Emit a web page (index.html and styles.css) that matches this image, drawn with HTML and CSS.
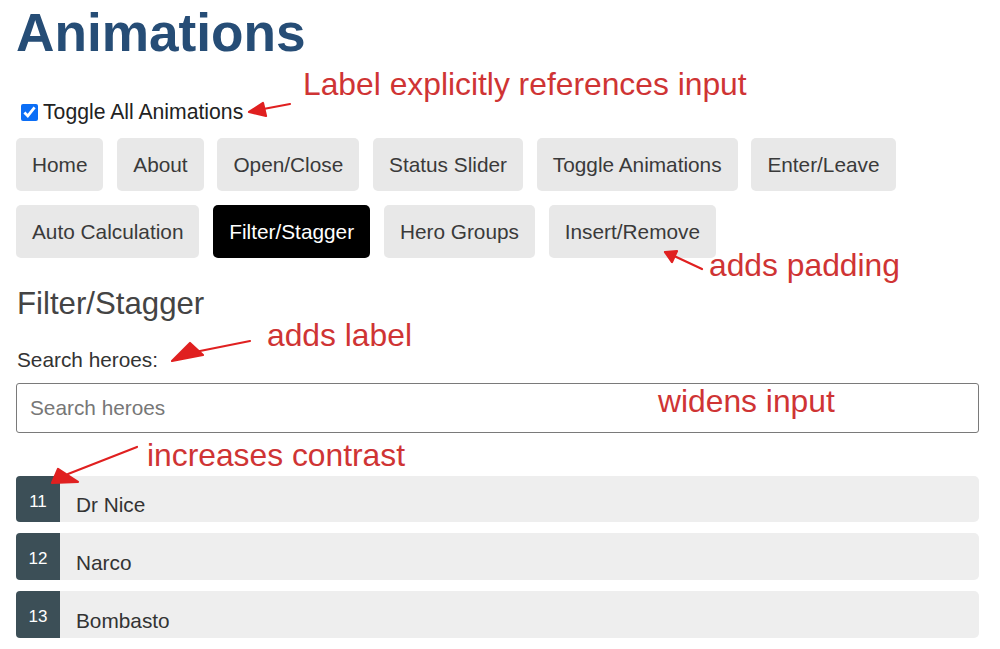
FILE: index.html
```html
<!DOCTYPE html>
<html lang="en">
<head>
<meta charset="utf-8">
<title>Animations</title>
<link rel="stylesheet" href="styles.css">
</head>
<body>
<div class="page">
  <h1 class="title">Animations</h1>
  <label class="toggle" for="toggle-all">
    <input type="checkbox" id="toggle-all" class="toggle-box" checked>
    Toggle All Animations
  </label>
  <nav class="nav">
    <a class="nav-btn">Home</a>
    <a class="nav-btn">About</a>
    <a class="nav-btn">Open/Close</a>
    <a class="nav-btn">Status Slider</a>
    <a class="nav-btn">Toggle Animations</a>
    <a class="nav-btn">Enter/Leave</a>
    <a class="nav-btn">Auto Calculation</a>
    <a class="nav-btn active">Filter/Stagger</a>
    <a class="nav-btn">Hero Groups</a>
    <a class="nav-btn">Insert/Remove</a>
  </nav>
  <h2 class="section-title">Filter/Stagger</h2>
  <label class="search-label" for="search">Search heroes:</label>
  <input class="search-input" id="search" type="text" placeholder="Search heroes">
  <ul class="heroes">
    <li class="hero"><span class="badge">11</span><span class="name">Dr Nice</span></li>
    <li class="hero"><span class="badge">12</span><span class="name">Narco</span></li>
    <li class="hero"><span class="badge">13</span><span class="name">Bombasto</span></li>
  </ul>
</div>

<div class="notes">
  <span class="note note-label">Label explicitly references input</span>
  <span class="note note-padding">adds padding</span>
  <span class="note note-addlabel">adds label</span>
  <span class="note note-widen">widens input</span>
  <span class="note note-contrast">increases contrast</span>
  <svg class="arrows" width="1000" height="649" viewBox="0 0 1000 649">
    <g fill="#e02020" stroke="#e02020" stroke-width="2.2" stroke-linecap="round" stroke-linejoin="round">
      <line x1="290" y1="104" x2="258" y2="110" fill="none"/>
      <polygon points="249,112 263,103 266,116"/>
      <line x1="702" y1="269" x2="672" y2="255" fill="none"/>
      <polygon points="665,252 677,251 672,262"/>
      <line x1="250" y1="341" x2="195" y2="352" fill="none"/>
      <polygon points="172,361 190,343 203,355"/>
      <line x1="137" y1="447" x2="68" y2="474" fill="none"/>
      <polygon points="52,483 58,469 78,482"/>
    </g>
  </svg>
</div>
</body>
</html>
```

FILE: styles.css
```css
* { box-sizing: border-box; }

html, body {
  margin: 0;
  padding: 0;
  background: #ffffff;
}

body {
  font-family: "Liberation Sans", Arial, Helvetica, sans-serif;
  color: #333333;
  width: 1000px;
  height: 649px;
  overflow: hidden;
  position: relative;
}

.page {
  padding: 0 21px 0 16px;
  display: flex;
  flex-direction: column;
}

.title {
  margin: 3px 0 0 0;
  font-size: 53.2px;
  line-height: 60px;
  font-weight: bold;
  color: #264d76;
}

.toggle {
  margin-top: 37px;
  display: flex;
  align-items: center;
  height: 24px;
  font-size: 21.2px;
  line-height: 24px;
  color: #222222;
}

.toggle-box {
  width: 17px;
  height: 17px;
  margin: 0 5px 0 5px;
  accent-color: #0b6ef6;
}

.nav {
  margin-top: 14px;
  display: flex;
  flex-wrap: wrap;
  gap: 14px 13.8px;
  width: 910px;
}

.nav-btn {
  display: block;
  height: 53px;
  padding: 15px 16px;
  line-height: 23px;
  font-size: 20.8px;
  color: #3a3a3a;
  background: #e8e8e8;
  border-radius: 5px;
}

.nav-btn.active {
  background: #000000;
  color: #ffffff;
}

.section-title {
  margin: 28px 0 0 1px;
  font-size: 31.2px;
  line-height: 36px;
  font-weight: normal;
  color: #444444;
}

.search-label {
  margin: 26px 0 0 1px;
  font-size: 20.8px;
  line-height: 24px;
  color: #333333;
}

.search-input {
  margin-top: 11px;
  width: 963px;
  height: 49.5px;
  padding: 0 13px;
  border: 1px solid #7a7a7a;
  border-radius: 3px;
  font-family: "Liberation Sans", Arial, Helvetica, sans-serif;
  font-size: 20.8px;
  color: #333333;
  background: #ffffff;
}

.search-input::placeholder {
  color: #777777;
}

.heroes {
  list-style: none;
  margin: 43px 0 0 0;
  padding: 0;
  width: 963px;
  display: flex;
  flex-direction: column;
  gap: 11.3px;
}

.hero {
  display: flex;
  align-items: flex-start;
  height: 46.5px;
  background: #eeeeee;
  border-radius: 5px;
}

.badge {
  width: 44px;
  height: 100%;
  padding-top: 17px;
  text-align: center;
  font-size: 17px;
  line-height: 17px;
  color: #ffffff;
  background: #3c4f57;
  border-radius: 4px 0 0 4px;
}

.name {
  margin-left: 16px;
  padding-top: 17.8px;
  font-size: 20.8px;
  line-height: 24px;
  color: #333333;
}

.notes {
  position: absolute;
  inset: 0;
  pointer-events: none;
}

.note {
  position: absolute;
  font-family: "Liberation Sans", Arial, Helvetica, sans-serif;
  font-size: 31.8px;
  line-height: 36px;
  color: #cf3434;
  white-space: nowrap;
}

.note-label { left: 303px; top: 66px; }
.note-padding { left: 709px; top: 247px; }
.note-addlabel { left: 267px; top: 317px; }
.note-widen { left: 658px; top: 383px; }
.note-contrast { left: 147px; top: 437px; }

.arrows {
  position: absolute;
  left: 0;
  top: 0;
}
```
